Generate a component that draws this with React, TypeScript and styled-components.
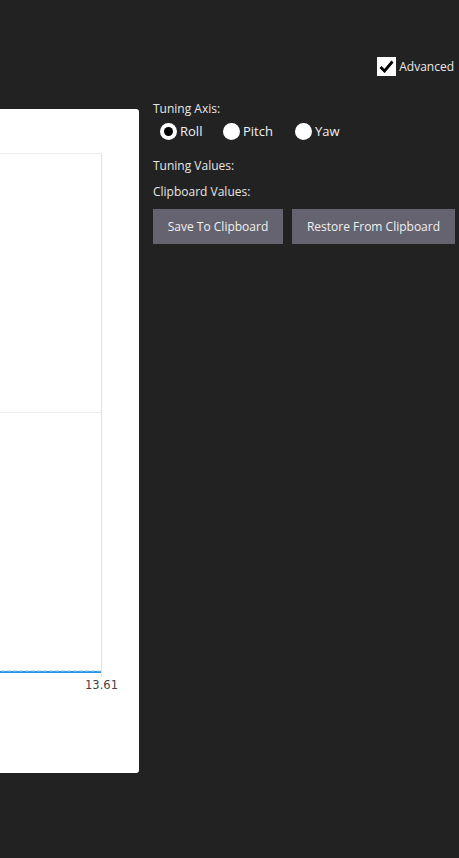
import React from 'react';
import styled, { createGlobalStyle } from 'styled-components';

const GlobalStyle = createGlobalStyle`
  html, body {
    margin: 0;
    padding: 0;
    background: #222222;
    overflow: hidden;
  }
  body {
    font-family: 'Open Sans', 'Noto Sans', sans-serif;
    color: #e6e6e6;
  }
`;

const Page = styled.div`
  width: 459px;
  height: 858px;
  overflow: hidden;
  background: #222222;
`;

const Header = styled.div`
  display: flex;
  justify-content: flex-end;
  padding: 57px 5px 0 0;
`;

const CheckLabel = styled.label`
  display: flex;
  align-items: center;
  gap: 3px;
  font-size: 12px;
  line-height: 19px;
  color: #e8e8e8;
`;

const CheckBox = styled.span`
  width: 19px;
  height: 19px;
  background: #ffffff;
  display: flex;
  align-items: center;
  justify-content: center;
`;

const Main = styled.div`
  display: flex;
  justify-content: flex-end;
  align-items: flex-start;
  gap: 14px;
  margin-top: 24px;
`;

const ChartCard = styled.div`
  flex-shrink: 0;
  width: 600px;
  height: 664px;
  margin-top: 9px;
  background: #ffffff;
  border-radius: 3px;
  overflow: hidden;
`;

const Side = styled.div`
  flex-shrink: 0;
  width: 306px;
  display: flex;
  flex-direction: column;
`;

const Label = styled.div<{ $top?: number }>`
  font-size: 12px;
  line-height: 17px;
  color: #e6e6e6;
  margin-top: ${(p) => p.$top ?? 0}px;
`;

const RadioRow = styled.div`
  display: flex;
  padding-left: 7px;
  margin-top: 5px;
`;

const RadioItem = styled.label<{ $w: number }>`
  display: flex;
  align-items: center;
  gap: 3px;
  font-size: 13px;
  line-height: 18px;
  color: #f0f0f0;
  width: ${(p) => p.$w}px;
`;

const RadioDot = styled.span<{ $checked?: boolean }>`
  width: 17px;
  height: 17px;
  border-radius: 50%;
  background: #ffffff;
  display: flex;
  align-items: center;
  justify-content: center;
  &::after {
    content: '';
    display: ${(p) => (p.$checked ? 'block' : 'none')};
    width: 9px;
    height: 9px;
    border-radius: 50%;
    background: #000000;
  }
`;

const ButtonRow = styled.div`
  display: flex;
  gap: 9px;
  margin-top: 9px;
`;

const Button = styled.button<{ $w: number }>`
  width: ${(p) => p.$w}px;
  height: 35px;
  padding: 0;
  border: none;
  border-radius: 0;
  background: #65636f;
  color: #f0f0f0;
  font-family: 'Open Sans', 'Noto Sans', sans-serif;
  font-size: 12px;
  white-space: nowrap;
`;

function Chart() {
  const w = 600;
  const plotRight = w - 38;
  return (
    <svg width={w} height={664} viewBox={`0 0 ${w} 664`}>
      <line x1={0} y1={44.5} x2={plotRight} y2={44.5} stroke="#ececec" />
      <line x1={0} y1={303.5} x2={plotRight} y2={303.5} stroke="#ececec" />
      <line x1={plotRight + 0.5} y1={44} x2={plotRight + 0.5} y2={568} stroke="#e2e2e2" />
      <line x1={0} y1={563} x2={plotRight} y2={563} stroke="#2196e6" strokeWidth={2} />
      <line x1={0} y1={562} x2={plotRight} y2={562} stroke="#8fcaf0" strokeDasharray="4 2" strokeWidth={1} />
      <text
        x={plotRight + 0.5}
        y={580}
        textAnchor="middle"
        fontFamily="'DejaVu Sans', sans-serif"
        fontSize={11.5}
        fill="#444444"
      >
        13.61
      </text>
    </svg>
  );
}

export default function App() {
  return (
    <Page>
      <GlobalStyle />
      <Header>
        <CheckLabel>
          <CheckBox>
            <svg width="15" height="13" viewBox="0 0 15 13">
              <path d="M1.5 7 L5.5 11 L13.5 1.5" fill="none" stroke="#000" strokeWidth="2.8" />
            </svg>
          </CheckBox>
          Advanced
        </CheckLabel>
      </Header>
      <Main>
        <ChartCard>
          <Chart />
        </ChartCard>
        <Side>
          <Label>Tuning Axis:</Label>
          <RadioRow>
            <RadioItem $w={63}>
              <RadioDot $checked />
              Roll
            </RadioItem>
            <RadioItem $w={72}>
              <RadioDot />
              Pitch
            </RadioItem>
            <RadioItem $w={60}>
              <RadioDot />
              Yaw
            </RadioItem>
          </RadioRow>
          <Label $top={17}>Tuning Values:</Label>
          <Label $top={9}>Clipboard Values:</Label>
          <ButtonRow>
            <Button $w={130}>Save To Clipboard</Button>
            <Button $w={163}>Restore From Clipboard</Button>
          </ButtonRow>
        </Side>
      </Main>
    </Page>
  );
}
